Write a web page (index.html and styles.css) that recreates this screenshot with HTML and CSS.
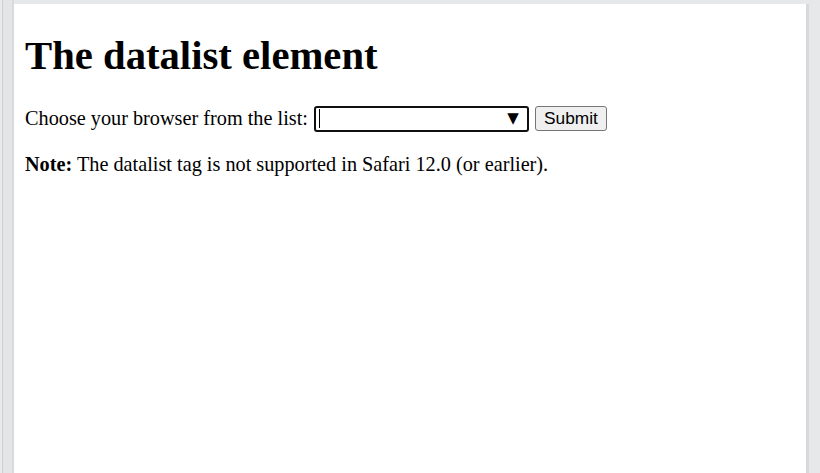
FILE: index.html
```html
<!DOCTYPE html>
<html>
<head>
<meta charset="utf-8">
<link rel="stylesheet" href="styles.css">
</head>
<body>
<div class="shell">
  <div class="gutter"></div>
  <main class="panel">
    <h1 class="title">The datalist element</h1>
    <form class="form">
      <label class="label" for="browser">Choose your browser from the list:</label>
      <span class="combo" id="browser"><span class="caret"></span><span class="arrow">&#9660;</span></span>
      <button class="submit" type="button">Submit</button>
    </form>
    <p class="note"><strong>Note:</strong> The datalist tag is not supported in Safari 12.0 (or earlier).</p>
  </main>
  <div class="right-edge"></div>
</div>
</body>
</html>
```

FILE: styles.css
```css
html, body {
  margin: 0;
  padding: 0;
  height: 100%;
  overflow: hidden;
}
body {
  background: #e7e8ea;
}
.shell {
  display: flex;
  height: 100%;
  padding-top: 4px;
  box-sizing: border-box;
}
.gutter {
  width: 14px;
  flex: none;
  margin-top: -4px;
  background: linear-gradient(to right, #e9eaec 0, #e9eaec 2px, #cfd0d2 2px, #cfd0d2 3px, #e4e5e7 3px, #e4e5e7 12px, #d9dadc 12px, #d9dadc 14px);
}
.panel {
  width: 792px;
  flex: none;
  background: #ffffff;
  padding: 0 10px;
  box-sizing: border-box;
  font-family: "Liberation Serif", "Times New Roman", serif;
  font-size: 20.25px;
  color: #000;
  display: flow-root;
}
.right-edge {
  width: 3px;
  flex: none;
  background: #d8d9db;
}
.title {
  font-size: 40.7px;
  font-weight: bold;
  margin: 29px 0 26px 1px;
  line-height: 46px;
}
.form {
  display: flex;
  align-items: center;
  margin: 0 0 0 1px;
  height: 27px;
}
.label {
  margin-right: 6px;
}
.combo {
  display: inline-flex;
  align-items: center;
  justify-content: space-between;
  width: 215px;
  height: 26px;
  box-sizing: border-box;
  border: 2px solid #101010;
  border-radius: 3px;
  padding: 0 8px 0 3px;
  background: #fff;
}
.caret {
  width: 1px;
  height: 19px;
  background: #000;
}
.arrow {
  font-family: "DejaVu Sans", sans-serif;
  font-size: 15px;
  line-height: 1;
  color: #000;
}
.submit {
  margin-left: 6px;
  width: 72px;
  height: 25px;
  font-family: "Liberation Sans", Arial, sans-serif;
  font-size: 17.3px;
  color: #000;
  background: #efefef;
  border: 1px solid #767676;
  border-radius: 3px;
  padding: 0;
}
.note {
  margin: 21px 0 0 1px;
}
```
